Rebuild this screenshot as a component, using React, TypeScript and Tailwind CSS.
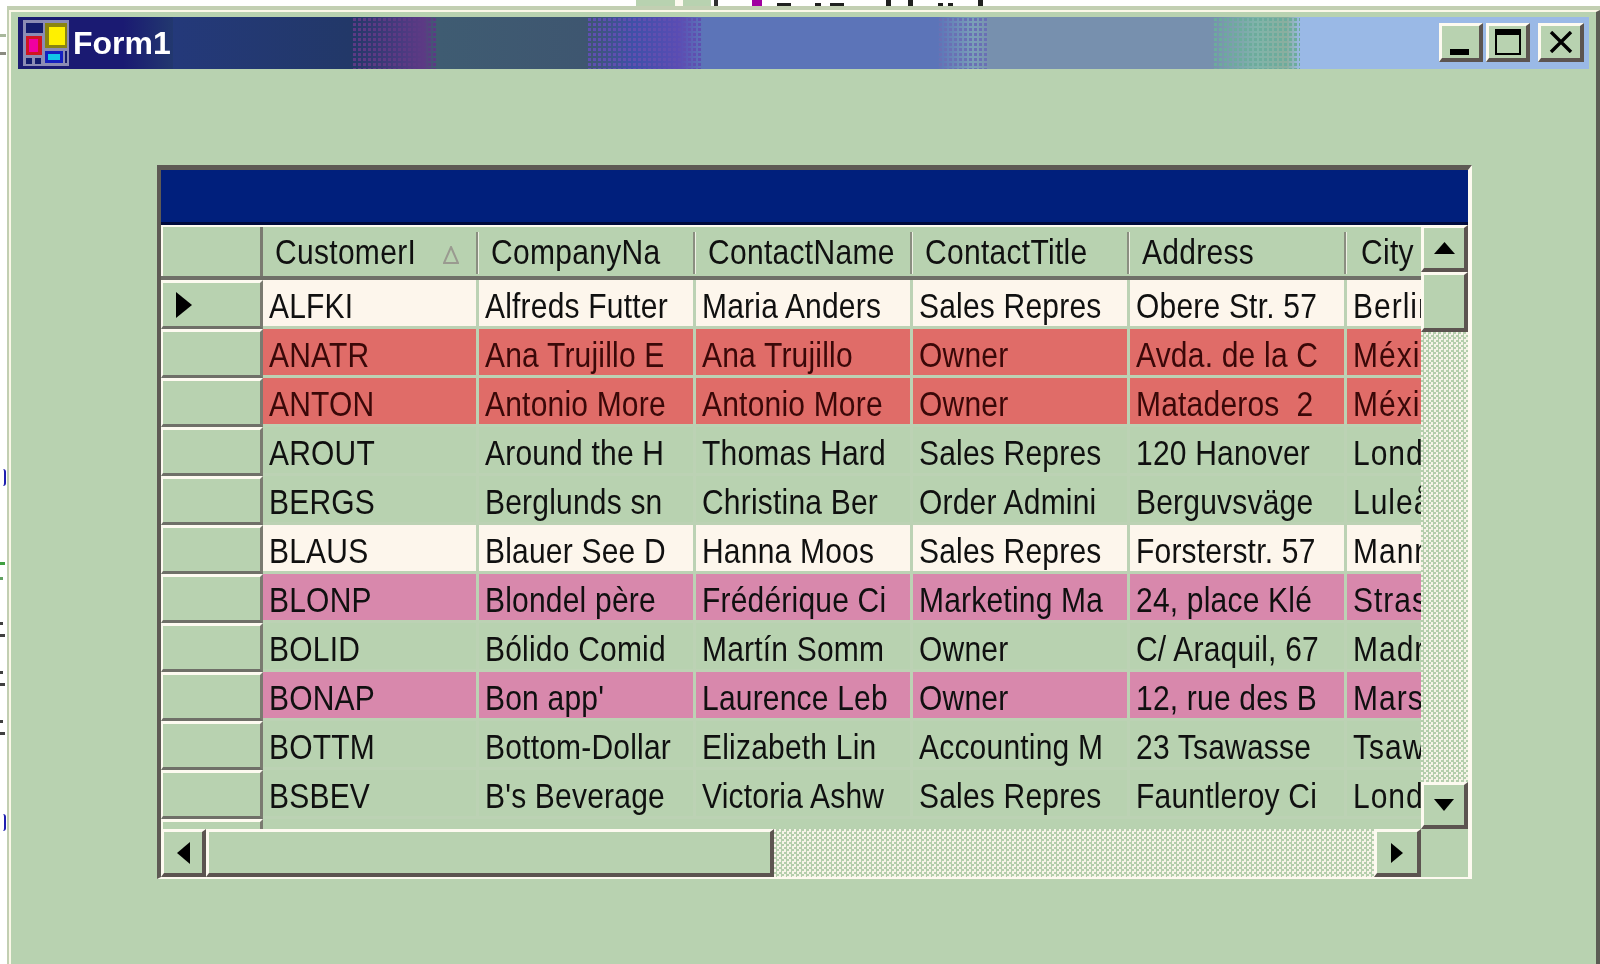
import React from "react";

const font = "font-['Liberation_Sans',Arial,sans-serif]";

const colW = ["w-[216px]", "w-[217px]", "w-[217px]", "w-[217px]", "w-[217px]", "w-[74px]"];
const headers = ["CustomerI", "CompanyNa", "ContactName", "ContactTitle", "Address", "City"];

const rows: { c: string; v: string[] }[] = [
  { c: "bg-[#fdf6ec]", v: ["ALFKI", "Alfreds Futter", "Maria Anders", "Sales Repres", "Obere Str. 57", "Berlin"] },
  { c: "bg-[#e06c68]", v: ["ANATR", "Ana Trujillo E", "Ana Trujillo", "Owner", "Avda. de la C", "México"] },
  { c: "bg-[#e06c68]", v: ["ANTON", "Antonio More", "Antonio More", "Owner", "Mataderos  2", "México"] },
  { c: "bg-[#b8d2b0]", v: ["AROUT", "Around the H", "Thomas Hard", "Sales Repres", "120 Hanover", "London"] },
  { c: "bg-[#b8d2b0]", v: ["BERGS", "Berglunds sn", "Christina Ber", "Order Admini", "Berguvsväge", "Luleå"] },
  { c: "bg-[#fdf6ec]", v: ["BLAUS", "Blauer See D", "Hanna Moos", "Sales Repres", "Forsterstr. 57", "Mannheim"] },
  { c: "bg-[#d888ac]", v: ["BLONP", "Blondel père", "Frédérique Ci", "Marketing Ma", "24, place Klé", "Strasbourg"] },
  { c: "bg-[#b8d2b0]", v: ["BOLID", "Bólido Comid", "Martín Somm", "Owner", "C/ Araquil, 67", "Madrid"] },
  { c: "bg-[#d888ac]", v: ["BONAP", "Bon app'", "Laurence Leb", "Owner", "12, rue des B", "Marseille"] },
  { c: "bg-[#b8d2b0]", v: ["BOTTM", "Bottom-Dollar", "Elizabeth Lin", "Accounting M", "23 Tsawasse", "Tsawassen"] },
  { c: "bg-[#b8d2b0]", v: ["BSBEV", "B's Beverage", "Victoria Ashw", "Sales Repres", "Fauntleroy Ci", "London"] },
];

const bevel =
  "border-t-[3px] border-l-[3px] border-r-[4px] border-b-[4px] border-t-[#fdfaf0] border-l-[#fdfaf0] border-r-[#5c5450] border-b-[#5c5450] bg-[#b8d2b0] flex items-center justify-center";

const track =
  "bg-[repeating-conic-gradient(#b4ceac_0%_25%,#f6f4e8_0%_50%)] bg-[length:5px_5px]";

function Tri({ d, w, h }: { d: string; w: number; h: number }) {
  return (
    <svg width={w} height={h} viewBox={`0 0 ${w} ${h}`}>
      <polygon points={d} fill="#000" />
    </svg>
  );
}

function TitleBar() {
  return (
    <div className="relative h-[52px] mt-[5px] ml-[7px] mr-[7px] flex overflow-hidden">
      <div className="w-[105px] bg-[#1a1a72]" />
      <div className="w-[50px] bg-[linear-gradient(90deg,#1a1a72,#22386f)]" />
      <div className="w-[179px] bg-[linear-gradient(90deg,#24397a,#223868)]" />
      <div className="w-[84px] bg-[radial-gradient(circle,#5c3a84_42%,transparent_48%),linear-gradient(90deg,#233868,#4a3a80_60%,#5c3a84_85%,#3f5c72)] bg-[length:5px_5px,100%_100%]" />
      <div className="w-[151px] bg-[linear-gradient(90deg,#3f5c72,#3e5670)]" />
      <div className="w-[115px] bg-[radial-gradient(circle,#5f4fb0_42%,transparent_48%),linear-gradient(90deg,#3e5670,#3f50a8_40%,#5a4cb4_80%,#5c74b8)] bg-[length:5px_5px,100%_100%]" />
      <div className="w-[236px] bg-[#5c74b8]" />
      <div className="w-[51px] bg-[radial-gradient(circle,#6a70b4_42%,transparent_48%),linear-gradient(90deg,#5c74b8,#7aa0b8_70%,#7790ae)] bg-[length:5px_5px,100%_100%]" />
      <div className="w-[224px] bg-[#7790ae]" />
      <div className="w-[87px] bg-[radial-gradient(circle,#6cac9c_42%,transparent_48%),linear-gradient(90deg,#7790ae,#80b4aa_50%,#8aae9e_85%,#9ab9e6)] bg-[length:5px_5px,100%_100%]" />
      <div className="flex-1 bg-[#9ab9e6]" />
      <svg className="absolute left-[5px] top-[3px]" width="46" height="46" viewBox="0 0 46 46">
        <rect x="0" y="0" width="46" height="46" fill="#8c8cb4" />
        <rect x="3" y="3" width="17" height="10" fill="#141c6c" />
        <rect x="3" y="16" width="16" height="19" fill="#d01420" />
        <rect x="6" y="19" width="9" height="13" fill="#f000a0" />
        <rect x="22" y="3" width="22" height="25" fill="#8a8410" />
        <rect x="26" y="7" width="16" height="18" fill="#fff000" />
        <rect x="22" y="31" width="18" height="12" fill="#1420c0" />
        <rect x="25" y="34" width="12" height="6" fill="#10c8e8" />
        <rect x="3" y="38" width="6" height="6" fill="#141c6c" />
        <rect x="12" y="38" width="6" height="6" fill="#141c6c" />
        <rect x="42" y="31" width="2" height="12" fill="#141c6c" />
      </svg>
      <span className={`absolute left-[55px] top-[7px] text-[32px] leading-[38px] font-bold text-white ${font}`}>Form1</span>
      <div className={`absolute left-[1421px] top-[6px] w-[44px] h-[39px] ${bevel}`}>
        <div className="w-[19px] h-[6px] bg-black mt-[20px] mr-[2px]" />
      </div>
      <div className={`absolute left-[1468px] top-[6px] w-[44px] h-[39px] ${bevel}`}>
        <div className="w-[26px] h-[26px] border-[2px] border-t-[6px] border-black" />
      </div>
      <div className={`absolute left-[1520px] top-[6px] w-[46px] h-[39px] ${bevel}`}>
        <svg width="24" height="22" viewBox="0 0 24 22">
          <path d="M2 1L22 21M22 1L2 21" stroke="#000" strokeWidth="3.4" fill="none" />
        </svg>
      </div>
    </div>
  );
}

function Grid() {
  return (
    <div className="w-[1260px] h-[604px] flex flex-col overflow-hidden bg-[#b8d2b0]">
      <div className="h-[55px] flex border-t-[2px] border-t-[#fdfaf0] border-b-[4px] border-b-[#6f7068]">
        <div className="w-[102px] border-l-[2px] border-l-[#fdfaf0] border-r-[3px] border-r-[#7a7a70]" />
        {headers.map((h, i) => (
          <div
            key={h}
            className={`relative ${colW[i]} ${i === 5 ? "pl-[14px]" : "pl-[12px]"} flex items-center overflow-hidden whitespace-nowrap text-[30px] tracking-[0.3px] text-[#101010] ${font}`}
          >
            <span className="inline-block scale-y-[1.15]">{h}</span>
            {i < 5 && <div className="absolute right-[0px] top-[5px] bottom-[2px] w-[3px] bg-[#8a8e80] border-r border-[#eef0e4]" />}
            {i === 0 && (
              <svg className="absolute left-[180px] top-[19px]" width="16" height="18" viewBox="0 0 16 18">
                <path d="M8 1L15 17H1Z" fill="none" stroke="#9a9a90" strokeWidth="2" />
              </svg>
            )}
          </div>
        ))}
      </div>
      {rows.map((r, ri) => (
        <div key={r.v[0]} className="h-[49px] flex shrink-0">
          <div className="w-[102px] flex items-center border-t-[3px] border-t-[#fdfaf0] border-l-[2px] border-l-[#fdfaf0] border-b-[3px] border-b-[#6f7068] border-r-[3px] border-r-[#7a7a70] pl-[13px]">
            {ri === 0 && <Tri w={16} h={26} d="0,0 16,13 0,26" />}
          </div>
          {r.v.map((t, i) => (
            <div
              key={i}
              className={`${colW[i]} ${r.c} ${i === 5 ? "tracking-[1px]" : "border-r-[3px] tracking-[0.2px]"} border-b-[3px] border-[#bcd2b4] pl-[6px] pt-[4px] flex items-center overflow-hidden whitespace-pre text-[30px] ${
                r.c === "bg-[#e06c68]" ? "text-[#3a0808]" : "text-[#101010]"
              } ${font}`}
            >
              <span className="inline-block scale-y-[1.15]">{t}</span>
            </div>
          ))}
        </div>
      ))}
      <div className="flex-1 w-[102px] border-t-[3px] border-t-[#fdfaf0] border-l-[2px] border-l-[#fdfaf0] border-r-[3px] border-r-[#7a7a70]" />
    </div>
  );
}

function VScroll() {
  return (
    <div className="w-[47px] h-[604px] flex flex-col">
      <div className={`h-[47px] ${bevel}`}>
        <Tri w={21} h={12} d="0,12 21,12 10.5,0" />
      </div>
      <div className={`h-[60px] ${bevel}`} />
      <div className={`flex-1 ${track}`} />
      <div className={`h-[47px] ${bevel}`}>
        <Tri w={20} h={12} d="0,0 20,0 10,12" />
      </div>
    </div>
  );
}

function HScroll() {
  return (
    <div className="h-[48px] flex">
      <div className={`w-[45px] ${bevel}`}>
        <Tri w={13} h={22} d="13,0 13,22 0,11" />
      </div>
      <div className={`w-[568px] ${bevel}`} />
      <div className={`w-[600px] ${track}`} />
      <div className={`w-[47px] ${bevel}`}>
        <Tri w={12} h={20} d="0,0 0,20 12,10" />
      </div>
      <div className="flex-1 bg-[#b8d2b0]" />
    </div>
  );
}

function Table() {
  return (
    <div className="ml-[146px] mt-[96px] w-[1315px] h-[714px] border-t-[5px] border-l-[4px] border-t-[#5e5a54] border-l-[#5e5a54] border-r-[4px] border-r-[#fdfaf0] border-b-[2px] border-b-[#fdfaf0] flex flex-col">
      <div className="h-[55px] bg-[#001f7c] border-b-[3px] border-b-[#000a3c]" />
      <div className="flex">
        <Grid />
        <VScroll />
      </div>
      <HScroll />
    </div>
  );
}

function Gutter() {
  return (
    <div className="relative w-[7px]">
      <div className="absolute left-0 top-[28px] w-[6px] h-[3px] bg-[#a8b89c]" />
      <div className="absolute left-0 top-[46px] w-[6px] h-[3px] bg-[#8a8a80]" />
      <div className="absolute left-[1px] top-[463px] w-[5px] h-[17px] border-r-[2px] border-[#2020b0] rounded-r-[3px]" />
      <div className="absolute left-0 top-[556px] w-[5px] h-[3px] bg-[#40a040]" />
      <div className="absolute left-0 top-[571px] w-[3px] h-[3px] bg-[#60a060]" />
      <div className="absolute left-0 top-[616px] w-[3px] h-[3px] bg-[#404040]" />
      <div className="absolute left-0 top-[628px] w-[5px] h-[3px] bg-[#404040]" />
      <div className="absolute left-0 top-[665px] w-[3px] h-[3px] bg-[#404040]" />
      <div className="absolute left-0 top-[677px] w-[5px] h-[3px] bg-[#404040]" />
      <div className="absolute left-0 top-[714px] w-[3px] h-[3px] bg-[#404040]" />
      <div className="absolute left-0 top-[726px] w-[5px] h-[3px] bg-[#404040]" />
      <div className="absolute left-[1px] top-[808px] w-[5px] h-[17px] border-r-[2px] border-[#2020b0] rounded-r-[3px]" />
    </div>
  );
}

function TopStrip() {
  return (
    <div className="relative h-[6px]">
      <div className="absolute left-[636px] top-0 w-[75px] h-[6px] bg-[#b8d2b0]" />
      <div className="absolute left-[675px] top-0 w-[8px] h-[6px] bg-[#fdfaf0]" />
      <div className="absolute left-[714px] top-0 w-[4px] h-[6px] bg-[#303030]" />
      <div className="absolute left-[752px] top-0 w-[10px] h-[6px] bg-[#a000a0]" />
      <div className="absolute left-[777px] top-[3px] w-[14px] h-[3px] bg-[#202020]" />
      <div className="absolute left-[815px] top-[3px] w-[6px] h-[3px] bg-[#202020]" />
      <div className="absolute left-[830px] top-[3px] w-[14px] h-[3px] bg-[#202020]" />
      <div className="absolute left-[886px] top-0 w-[5px] h-[6px] bg-[#202020]" />
      <div className="absolute left-[908px] top-0 w-[5px] h-[6px] bg-[#202020]" />
      <div className="absolute left-[938px] top-[3px] w-[5px] h-[3px] bg-[#202020]" />
      <div className="absolute left-[948px] top-[3px] w-[5px] h-[3px] bg-[#202020]" />
      <div className="absolute left-[978px] top-0 w-[5px] h-[6px] bg-[#202020]" />
    </div>
  );
}

export default function App() {
  return (
    <div className="w-[1600px] h-[964px] overflow-hidden bg-white flex flex-col blur-[0.6px]">
      <TopStrip />
      <div className="flex flex-1">
        <Gutter />
        <div className="flex-1 border-t-[4px] border-l-[2px] border-[#c2cfb2] flex">
          <div className="flex-1 border-t-[2px] border-l-[2px] border-t-[#fbf8e8] border-l-[#fbf8e8] border-r-[4px] border-r-[#5c5c54] bg-[#b8d2b0]">
            <TitleBar />
            <Table />
          </div>
        </div>
      </div>
    </div>
  );
}
